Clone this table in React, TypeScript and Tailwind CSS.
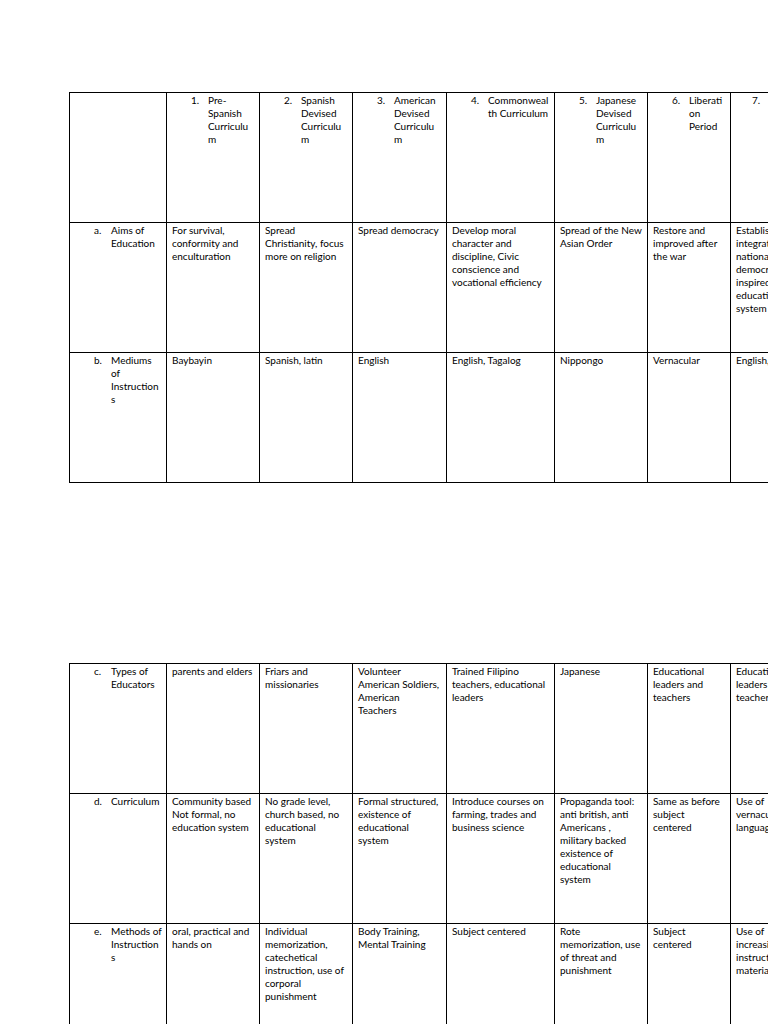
const cols = [97, 93, 93, 94, 108, 93, 83, 100];

type Cell = string[];

const header: { num: string; lines: string[]; pad?: string }[] = [
  { num: "1.", lines: ["Pre-", "Spanish", "Curriculu", "m"] },
  { num: "2.", lines: ["Spanish", "Devised", "Curriculu", "m"] },
  { num: "3.", lines: ["American", "Devised", "Curriculu", "m"] },
  { num: "4.", lines: ["Commonweal", "th Curriculum"] },
  { num: "5.", lines: ["Japanese", "Devised", "Curriculu", "m"] },
  { num: "6.", lines: ["Liberati", "on", "Period"] },
  { num: "7.", lines: ["Post-War"], pad: "pl-[21px]" },
];

const tableOne: { num: string; label: string[]; cells: Cell[] }[] = [
  {
    num: "a.",
    label: ["Aims of", "Education"],
    cells: [
      ["For survival,", "conformity and", "enculturation"],
      ["Spread", "Christianity, focus", "more on religion"],
      ["Spread democracy"],
      ["Develop moral", "character and", "discipline, Civic", "conscience and", "vocational efficiency"],
      ["Spread of the New", "Asian Order"],
      ["Restore and", "improved after", "the war"],
      ["Establish", "integrated", "national", "democracy", "inspired", "educational", "system"],
    ],
  },
  {
    num: "b.",
    label: ["Mediums", "of", "Instruction", "s"],
    cells: [
      ["Baybayin"],
      ["Spanish, latin"],
      ["English"],
      ["English, Tagalog"],
      ["Nippongo"],
      ["Vernacular"],
      ["English, Filipino"],
    ],
  },
];

const tableTwo: { num: string; label: string[]; cells: Cell[] }[] = [
  {
    num: "c.",
    label: ["Types of", "Educators"],
    cells: [
      ["parents and elders"],
      ["Friars and", "missionaries"],
      ["Volunteer", "American Soldiers,", "American", "Teachers"],
      ["Trained Filipino", "teachers, educational", "leaders"],
      ["Japanese"],
      ["Educational", "leaders and", "teachers"],
      ["Educational", "leaders and", "teachers"],
    ],
  },
  {
    num: "d.",
    label: ["Curriculum"],
    cells: [
      ["Community based", "Not formal, no", "education system"],
      ["No grade level,", "church based, no", "educational", "system"],
      ["Formal structured,", "existence of", "educational", "system"],
      ["Introduce courses on", "farming, trades and", "business science"],
      ["Propaganda tool:", "anti british, anti", "Americans ,", "military backed", "existence of", "educational", "system"],
      ["Same as before", "subject", "centered"],
      ["Use of", "vernacular", "language"],
    ],
  },
  {
    num: "e.",
    label: ["Methods of", "Instruction", "s"],
    cells: [
      ["oral, practical and", "hands on"],
      ["Individual", "memorization,", "catechetical", "instruction, use of", "corporal", "punishment"],
      ["Body Training,", "Mental Training"],
      ["Subject centered"],
      ["Rote", "memorization, use", "of threat and", "punishment"],
      ["Subject", "centered"],
      ["Use of", "increasing", "instructional", "materials"],
    ],
  },
];

function Lines({ lines }: { lines: string[] }) {
  return (
    <div>
      {lines.map((l, i) => (
        <div key={i} className="whitespace-nowrap">
          {l}
        </div>
      ))}
    </div>
  );
}

function Numbered({ num, lines, pad = "pl-[24px]" }: { num: string; lines: string[]; pad?: string }) {
  return (
    <div className={`flex ${pad}`}>
      <span className="w-[17px] shrink-0">{num}</span>
      <Lines lines={lines} />
    </div>
  );
}

const td = "border border-black align-top pt-px overflow-hidden h-[130px]";

function Table({
  head,
  rows,
}: {
  head?: boolean;
  rows: { num: string; label: string[]; cells: Cell[] }[];
}) {
  return (
    <table className="table-fixed border-collapse w-[761px]">
      <colgroup>
        {cols.map((w, i) => (
          <col key={i} style={{ width: w }} />
        ))}
      </colgroup>
      <tbody>
        {head && (
          <tr>
            <td className={td}></td>
            {header.map((h, i) => (
              <td key={i} className={td}>
                <Numbered num={h.num} lines={h.lines} pad={h.pad} />
              </td>
            ))}
          </tr>
        )}
        {rows.map((r, i) => (
          <tr key={i}>
            <td className={td}>
              <Numbered num={r.num} lines={r.label} />
            </td>
            {r.cells.map((c, j) => (
              <td key={j} className={`${td} pl-[5px]`}>
                <Lines lines={c} />
              </td>
            ))}
          </tr>
        ))}
      </tbody>
    </table>
  );
}

export default function App() {
  return (
    <div className="w-[768px] h-[1024px] overflow-hidden bg-white pl-[69px] pt-[92px] text-[10px] leading-[13px] text-black font-['Lato',sans-serif]">
      <Table head rows={tableOne} />
      <div className="h-[180px]" />
      <Table rows={tableTwo} />
    </div>
  );
}
